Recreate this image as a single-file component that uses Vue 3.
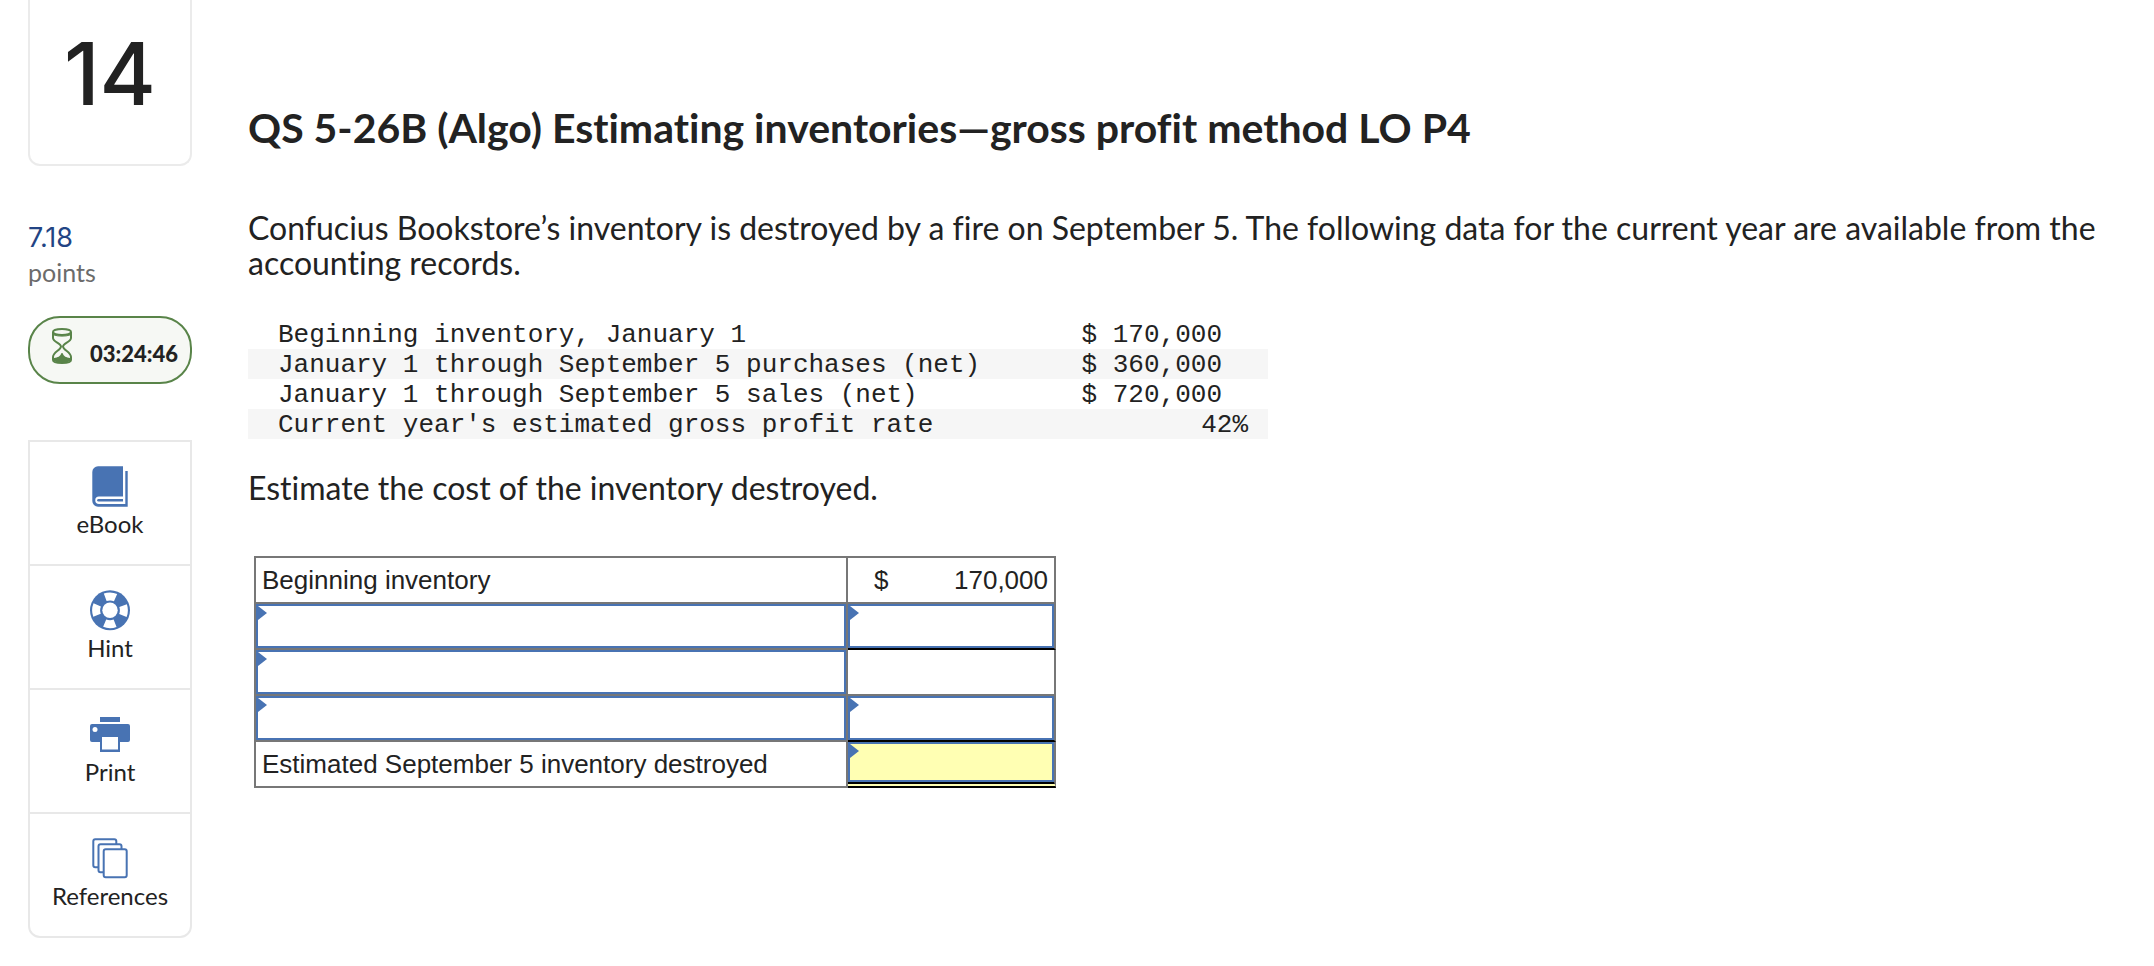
<script setup>
import { reactive } from 'vue'

const data = [
  { label: 'Beginning inventory, January 1', value: '$ 170,000' },
  { label: 'January 1 through September 5 purchases (net)', value: '$ 360,000' },
  { label: 'January 1 through September 5 sales (net)', value: '$ 720,000' },
  { label: "Current year's estimated gross profit rate", value: '42%', percent: true }
]

const entries = reactive([
  { name: '', amount: '', hasAmount: true, ruled: true },
  { name: '', amount: '', hasAmount: false, ruled: false },
  { name: '', amount: '', hasAmount: true, ruled: true }
])
const result = reactive({ amount: '' })
</script>

<template>
  <div class="page">
    <aside class="sidebar">
      <div class="number">14</div>
      <div class="points">
        <div class="points-value">7.18</div>
        <div class="points-label">points</div>
      </div>
      <div class="timer">
        <svg width="20" height="40" viewBox="0 0 20 40" aria-hidden="true">
          <g fill="none" stroke="#598449" stroke-width="2">
            <ellipse cx="10" cy="4" rx="9" ry="3" />
            <path d="M1 4v6c0 4 8 5 8 8.500S1 24 1 29v3c0 4 18 4 18 0v-3c0-5-8-7-8-10.500S19 14 19 10V4" />
            <path d="M2 7c4 1.500 12 1.500 16 0" stroke-width="1" />
          </g>
          <path d="M2 30c4-.5 6-1.500 7.500-5h1c1.500 3.500 3.500 4.500 7.500 5v3c-3 2.500-13 2.500-16 0z" fill="#598449" />
        </svg>
        <span class="time">03:24:46</span>
      </div>
      <nav class="tools">
        <button type="button" class="tool">
          <svg width="40" height="42" viewBox="0 0 40 42" aria-hidden="true">
            <path d="M8 .3h25V5h4.700v35.700H8a5.700 5.700 0 0 1-5.700-5.700V6A5.700 5.700 0 0 1 8 .3z" fill="#4873b3" />
            <path d="M33 0h2.300v38H9a3.750 3.750 0 0 1 0-7.500h24z" fill="#fff" />
            <path d="M33 32.900v2.700H8.500a1.350 1.350 0 0 1 0-2.700z" fill="#4873b3" />
          </svg>
          <span>eBook</span>
        </button>
        <button type="button" class="tool">
          <svg width="40" height="42" viewBox="0 0 40 42" aria-hidden="true">
            <circle cx="20" cy="20.300" r="20" fill="#4873b3" />
            <circle cx="20" cy="20.300" r="13.900" fill="none" stroke="#fff" stroke-width="8" stroke-dasharray="10.600 11.230" stroke-dashoffset="5.300" />
            <circle cx="20" cy="20.300" r="7.700" fill="#fff" />
          </svg>
          <span>Hint</span>
        </button>
        <button type="button" class="tool">
          <svg width="40" height="42" viewBox="0 0 40 42" aria-hidden="true">
            <path d="M10 3h20v5H10zM2 10h36a2 2 0 0 1 2 2v14a2 2 0 0 1-2 2h-8v10H10V28H2a2 2 0 0 1-2-2V12a2 2 0 0 1 2-2z" fill="#4873b3" />
            <path d="M12 23h16v12.500H12z" fill="#fff" />
            <circle cx="5" cy="15.500" r="2.500" fill="#fff" />
          </svg>
          <span>Print</span>
        </button>
        <button type="button" class="tool">
          <svg width="40" height="42" viewBox="0 0 40 42" aria-hidden="true">
            <g fill="#fff" stroke="#4873b3" stroke-width="2">
              <rect x="3.300" y="1.300" width="23" height="28" rx="2" />
              <rect x="8.500" y="6.300" width="23" height="28" rx="2" />
              <rect x="13.700" y="11.300" width="23" height="28" rx="2" />
            </g>
          </svg>
          <span>References</span>
        </button>
      </nav>
    </aside>

    <main class="content">
      <h1>QS 5-26B (Algo) Estimating inventories—gross profit method LO P4</h1>
      <p>
        Confucius Bookstore’s inventory is destroyed by a fire on September 5. The following data for the current year are available from the accounting records.
      </p>

      <table class="data">
        <tbody>
          <tr v-for="row in data" :key="row.label">
            <th scope="row">{{ row.label }}</th>
            <td :class="{ percent: row.percent }">{{ row.value }}</td>
          </tr>
        </tbody>
      </table>

      <p>Estimate the cost of the inventory destroyed.</p>

      <table class="answer">
        <tbody>
          <tr>
            <th scope="row" class="label-col">Beginning inventory</th>
            <td class="amount-col">
              <div class="money"><span>$</span><span>170,000</span></div>
            </td>
          </tr>
          <tr v-for="(entry, i) in entries" :key="i">
            <td class="entry">
              <input v-model="entry.name" type="text" :aria-label="`Line ${i + 2} description`" />
            </td>
            <td :class="{ entry: entry.hasAmount, ruled: entry.ruled }">
              <input v-if="entry.hasAmount" v-model="entry.amount" type="text" :aria-label="`Line ${i + 2} amount`" />
            </td>
          </tr>
          <tr>
            <th scope="row"><label for="destroyed">Estimated September 5 inventory destroyed</label></th>
            <td class="entry total">
              <input id="destroyed" v-model="result.amount" type="text" />
            </td>
          </tr>
        </tbody>
      </table>
    </main>
  </div>
</template>

<style>
body {
  margin: 0;
  background: #fff;
}
</style>

<style scoped>
.page {
  display: flex;
  gap: 56px;
  padding: 0 28px;
  color: #222;
  font-family: Lato, "Liberation Sans", sans-serif;
  font-variant-ligatures: none;
}

.page * {
  box-sizing: border-box;
}

.sidebar {
  flex: 0 0 164px;
}

.number {
  padding: 22px 0 38px;
  border: 2px solid #ebebeb;
  border-top: 0;
  border-radius: 0 0 12px 12px;
  font: 500 86px/104px Inter, sans-serif;
  text-align: center;
}

.points {
  margin-top: 55px;
  line-height: 34px;
}

.points-value {
  color: #224484;
  font-family: Inter, sans-serif;
  font-size: 27px;
}

.points-label {
  color: #6b6b6b;
  font-size: 25px;
}

.timer {
  display: flex;
  align-items: flex-end;
  gap: 18px;
  margin-top: 27px;
  padding: 10px 0 14px 22px;
  border: 2px solid #598449;
  border-radius: 32px;
  background: #f6f8f4;
}

.time {
  font-size: 22px;
  font-weight: 900;
  line-height: 28px;
}

.tools {
  margin-top: 56px;
  border: 2px solid #e8e8e8;
  border-radius: 0 0 12px 12px;
}

.tool {
  display: flex;
  flex-direction: column;
  align-items: center;
  width: 100%;
  padding: 24px 0;
  border: 0;
  background: none;
  color: inherit;
  font: 24px/32px Lato, "Liberation Sans", sans-serif;
  cursor: pointer;
}

.tool + .tool {
  border-top: 2px solid #e8e8e8;
}

.content {
  flex: 1;
  min-width: 0;
  padding-top: 104px;
}

h1 {
  margin: 0 0 58px;
  font-size: 41px;
  font-weight: 700;
  line-height: 48px;
}

p {
  margin: 0;
  font-size: 32px;
  line-height: 35px;
}

table {
  border-spacing: 0;
}

th {
  font-weight: 400;
  text-align: left;
}

td,
th {
  padding: 0;
}

.data {
  width: 1020px;
  max-width: 100%;
  margin: 39px 0 31px;
  font: 26px/28px "Liberation Mono", monospace;
}

.data tr:nth-child(even) {
  background: #f6f6f6;
}

.data th,
.data td {
  padding-top: 2px;
}

.data th {
  padding-left: 30px;
}

.data td {
  padding-right: 46px;
  text-align: right;
}

.data .percent {
  padding-right: 20px;
}

.answer {
  margin: 51px 0 0 6px;
  border-top: 2px solid #777;
  border-left: 2px solid #777;
  font: 26px/44px "Liberation Sans", sans-serif;
}

.answer td,
.answer th {
  height: 46px;
  border-right: 2px solid #777;
  border-bottom: 2px solid #777;
}

.answer th {
  padding: 0 6px;
}

.label-col {
  width: 592px;
}

.amount-col {
  width: 208px;
}

.money {
  display: flex;
  justify-content: space-between;
  padding: 0 6px 0 26px;
}

.answer .ruled {
  border-bottom-color: #000;
}

.entry {
  position: relative;
}

.entry::before {
  content: "";
  position: absolute;
  top: 2px;
  left: 2px;
  border: solid transparent;
  border-width: 7px 0 7px 9px;
  border-left-color: #4873b3;
  pointer-events: none;
}

.entry input {
  display: block;
  width: 100%;
  height: 44px;
  padding: 0 12px;
  border: 2px solid #4873b3;
  border-radius: 0;
  background: transparent;
  color: inherit;
  font: inherit;
}

.answer .total {
  border-bottom: 6px double #000;
  background: #ffffb3;
}

.total input {
  height: 40px;
  text-align: right;
}
</style>
